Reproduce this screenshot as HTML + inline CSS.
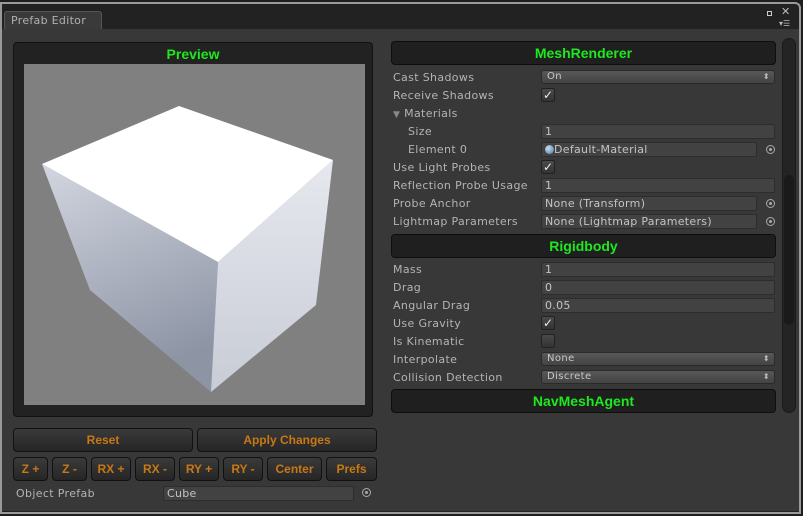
<!DOCTYPE html>
<html><head><style>
*{margin:0;padding:0;box-sizing:border-box}
body{width:803px;height:516px;background:#1e1e1e;position:relative;overflow:hidden;font-family:"DejaVu Sans","Liberation Sans",sans-serif;font-size:11px;color:#b4b4b4}
.a{position:absolute}
.win{left:0;top:2px;width:801px;height:512px;border:2px solid #9a9a9a;border-radius:0 6px 0 0;background:#222}
.content{left:2px;top:29px;width:797px;height:482px;background:#383838}
.tab{left:4px;top:11px;width:98px;height:18px;background:#3a3a3a;border:1px solid #555;border-bottom:none;border-radius:3px 3px 0 0;color:#b0b0b0;padding:2px 0 0 6px;font-size:11px;letter-spacing:0.3px}
.box{background:#222;border:1px solid #111;border-radius:4px}
.g{color:#1ee81e;font-family:"Liberation Sans",sans-serif;font-weight:bold;font-size:14px;text-align:center}
.hdr{left:391px;width:385px;height:24px;background:#1f1f1f;border:1px solid #0e0e0e;border-radius:4px;padding-top:3px}
.lbl{left:393px;height:18px;line-height:18px;letter-spacing:0.35px;top:1px}
.fld{left:541px;height:15px;background:#424242;border:1px solid #2d2d2d;border-radius:2px;line-height:13px;padding-left:3px;color:#c4c4c4;letter-spacing:0.3px}
.dd{left:541px;width:234px;height:14px;border-radius:3px;background:linear-gradient(#585858,#434343);border:1px solid #2a2a2a;font-size:10px;line-height:12px;padding-left:5px;color:#c8c8c8;letter-spacing:0.4px}
.dd:after{content:"⬍";position:absolute;right:4px;top:0;font-size:8px;color:#bbb}
.cb{left:541px;width:14px;height:14px;border-radius:2px;background:linear-gradient(#4a4a4a,#333);border:1px solid #222;color:#eee;font-size:12px;line-height:12px;text-align:center}
.dot{width:9px;height:9px;border:1px solid #aaa;border-radius:50%}
.dot:after{content:"";position:absolute;left:2px;top:2px;width:3px;height:3px;background:#aaa;border-radius:50%}
.btn{height:24px;background:linear-gradient(#3a3a3a,#262626);border:1px solid #111;border-radius:4px;color:#c87814;font-family:"Liberation Sans",sans-serif;font-weight:bold;font-size:12px;text-align:center;line-height:22px}
</style></head><body>
<div class="a win"></div>
<div class="a tab">Prefab Editor</div>
<div class="a" style="left:767px;top:11px;width:5px;height:5px;border:1px solid #ccc"></div>
<div class="a" style="left:781px;top:5px;color:#bbb;font-size:11px">✕</div>
<div class="a" style="left:779px;top:19px;color:#bbb;font-size:8px">▾☰</div>
<div class="a content"></div>

<div class="a box" style="left:13px;top:42px;width:360px;height:375px"></div>
<div class="a g" style="left:13px;top:46px;width:360px">Preview</div>
<svg class="a" style="left:24px;top:64px" width="341" height="341">
<defs>
<linearGradient id="lf" x1="0" y1="0" x2="0.3" y2="1"><stop offset="0" stop-color="#d2d6e0"/><stop offset="1" stop-color="#8d94a4"/></linearGradient>
<linearGradient id="rf" x1="0" y1="0" x2="0" y2="1"><stop offset="0" stop-color="#e6e8ee"/><stop offset="1" stop-color="#c8ccd6"/></linearGradient>
</defs>
<rect width="341" height="341" fill="#808080"/>
<polygon points="18,100 66,226 187,328 194,198" fill="url(#lf)"/>
<polygon points="194,198 309,96 292,241 187,328" fill="url(#rf)"/>
<polygon points="18,100 155,42 309,96 194,198" fill="#ffffff"/>
</svg>

<div class="a btn" style="left:13px;top:428px;width:180px">Reset</div>
<div class="a btn" style="left:197px;top:428px;width:180px">Apply Changes</div>
<div class="a btn" style="left:13px;top:457px;width:35px">Z +</div>
<div class="a btn" style="left:52px;top:457px;width:35px">Z -</div>
<div class="a btn" style="left:91px;top:457px;width:40px">RX +</div>
<div class="a btn" style="left:135px;top:457px;width:40px">RX -</div>
<div class="a btn" style="left:179px;top:457px;width:40px">RY +</div>
<div class="a btn" style="left:223px;top:457px;width:40px">RY -</div>
<div class="a btn" style="left:267px;top:457px;width:55px">Center</div>
<div class="a btn" style="left:326px;top:457px;width:51px">Prefs</div>
<div class="a" style="left:16px;top:487px;letter-spacing:0.35px">Object Prefab</div>
<div class="a fld" style="left:163px;top:486px;width:191px">Cube</div>
<div class="a dot" style="left:362px;top:488px"></div>

<div class="a hdr" style="top:41px"><div class="g">MeshRenderer</div></div>
<div class="a lbl" style="top:69px">Cast Shadows</div><div class="a dd" style="top:70px">On</div>
<div class="a lbl" style="top:87px">Receive Shadows</div><div class="a cb" style="top:88px">✓</div>
<div class="a lbl" style="top:105px"><span style="font-size:9px;color:#888">▼</span> Materials</div>
<div class="a lbl" style="top:123px;left:408px">Size</div><div class="a fld" style="top:124px;width:234px">1</div>
<div class="a lbl" style="top:141px;left:408px">Element 0</div><div class="a fld" style="top:142px;width:216px"><span style="display:inline-block;width:9px;height:9px;border-radius:50%;background:radial-gradient(circle at 35% 35%,#cde,#47a);vertical-align:-1px"></span>Default-Material</div><div class="a dot" style="left:766px;top:145px"></div>
<div class="a lbl" style="top:159px">Use Light Probes</div><div class="a cb" style="top:160px">✓</div>
<div class="a lbl" style="top:177px">Reflection Probe Usage</div><div class="a fld" style="top:178px;width:234px">1</div>
<div class="a lbl" style="top:195px">Probe Anchor</div><div class="a fld" style="top:196px;width:216px">None (Transform)</div><div class="a dot" style="left:766px;top:199px"></div>
<div class="a lbl" style="top:213px">Lightmap Parameters</div><div class="a fld" style="top:214px;width:216px">None (Lightmap Parameters)</div><div class="a dot" style="left:766px;top:217px"></div>

<div class="a hdr" style="top:234px"><div class="g">Rigidbody</div></div>
<div class="a lbl" style="top:261px">Mass</div><div class="a fld" style="top:262px;width:234px">1</div>
<div class="a lbl" style="top:279px">Drag</div><div class="a fld" style="top:280px;width:234px">0</div>
<div class="a lbl" style="top:297px">Angular Drag</div><div class="a fld" style="top:298px;width:234px">0.05</div>
<div class="a lbl" style="top:315px">Use Gravity</div><div class="a cb" style="top:316px">✓</div>
<div class="a lbl" style="top:333px">Is Kinematic</div><div class="a cb" style="top:334px"></div>
<div class="a lbl" style="top:351px">Interpolate</div><div class="a dd" style="top:352px">None</div>
<div class="a lbl" style="top:369px">Collision Detection</div><div class="a dd" style="top:370px">Discrete</div>
<div class="a hdr" style="top:389px"><div class="g">NavMeshAgent</div></div>

<div class="a" style="left:782px;top:38px;width:14px;height:375px;background:#242424;border-radius:7px;border:1px solid #1a1a1a"></div>
<div class="a" style="left:784px;top:175px;width:10px;height:150px;background:#1a1a1a;border-radius:5px"></div>
</body></html>
